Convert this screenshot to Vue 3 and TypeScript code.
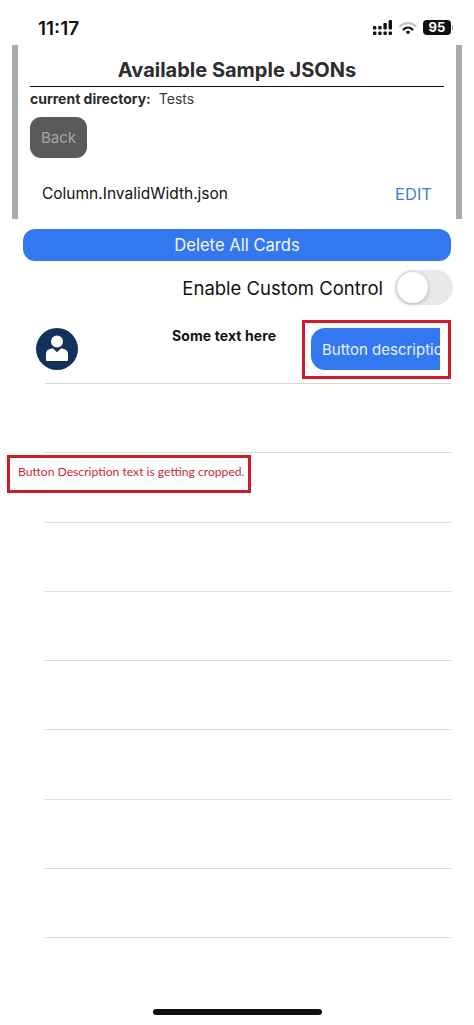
<script setup lang="ts">
const emptyRows: number[] = [1, 2, 3, 4, 5, 6, 7, 8]
</script>

<template>
  <div class="screen">
    <div class="status">
      <span class="time">11:17</span>
      <div class="status-icons">
        <svg class="signal" width="20" height="16" viewBox="0 0 20 16">
          <g fill="#111">
            <rect x="0" y="6" width="3.4" height="3.4" rx="1" />
            <rect x="0" y="11.5" width="3.4" height="3.4" rx="1" />
            <rect x="5.2" y="6" width="3.4" height="3.4" rx="1" />
            <rect x="5.2" y="11.5" width="3.4" height="3.4" rx="1" />
            <rect x="10.4" y="3" width="3.4" height="6.4" rx="1" />
            <rect x="10.4" y="11.5" width="3.4" height="3.4" rx="1" />
            <rect x="15.6" y="0" width="3.4" height="9.4" rx="1" />
            <rect x="15.6" y="11.5" width="3.4" height="3.4" rx="1" />
          </g>
        </svg>
        <svg class="wifi" width="18" height="14" viewBox="0 0 18 14">
          <path d="M1.2 5.2a11.4 11.4 0 0 1 15.6 0" fill="none" stroke="#c4c4c4" stroke-width="2.2" stroke-linecap="round" />
          <path d="M4.6 8.4a6.6 6.6 0 0 1 8.8 0" fill="none" stroke="#111" stroke-width="2.2" stroke-linecap="round" />
          <path d="M6.8 10.9a3.2 3.2 0 0 1 4.4 0L9 13.4z" fill="#111" />
        </svg>
        <div class="battery">95</div>
        <span class="nub"></span>
      </div>
    </div>

    <section class="panel">
      <h1 class="title">Available Sample JSONs</h1>
      <div class="directory">
        <strong>current directory:</strong>
        <span>Tests</span>
      </div>
      <button class="back">Back</button>
      <div class="file-row">
        <span>Column.InvalidWidth.json</span>
        <span class="edit">EDIT</span>
      </div>
    </section>

    <button class="delete">Delete All Cards</button>

    <div class="control">
      <span>Enable Custom Control</span>
      <span class="toggle"><span class="knob"></span></span>
    </div>

    <div class="card-row">
      <svg class="avatar" width="42" height="42" viewBox="0 0 42 42">
        <circle cx="21" cy="21" r="21" fill="#12325c" />
        <circle cx="21" cy="13.500" r="6" fill="#fff" />
        <path d="M10 32v-6q0-4 4-5l2.800-.7 4.200 4 4.200-4 2.800.7q4 1 4 5v6q0 1-1 1h-20q-1 0-1-1z" fill="#fff" />
      </svg>
      <strong class="card-text">Some text here</strong>
      <button class="describe">Button description text</button>
      <span class="mark-button"></span>
    </div>

    <div class="list">
      <div v-for="row in emptyRows" :key="row" class="empty-row"></div>
      <div class="note">Button Description text is getting cropped.</div>
    </div>

    <div class="home"></div>
  </div>
</template>

<style>
html, body {
  margin: 0;
  background: #fff;
}
</style>

<style scoped>
.screen {
  width: 474px;
  height: 1025px;
  overflow: hidden;
  position: relative;
  background: #fff;
  font-family: Inter, "Noto Sans", sans-serif;
  color: #111;
}
.status {
  height: 45px;
  box-sizing: border-box;
  padding: 19px 21px 0 38px;
  display: flex;
  justify-content: space-between;
  align-items: flex-start;
}
.time {
  font-size: 19px;
  line-height: 20px;
  font-weight: 600;
}
.status-icons {
  display: flex;
  align-items: flex-start;
  padding-top: 1px;
}
.signal {
  margin-right: 6px;
}
.wifi {
  margin-right: 6px;
  margin-top: 1px;
}
.battery {
  width: 28px;
  height: 15px;
  border-radius: 4px;
  background: #111;
  color: #fff;
  font-size: 13px;
  line-height: 15px;
  font-weight: 700;
  text-align: center;
}
.nub {
  width: 1px;
  height: 5px;
  margin: 5px 0 0 1px;
  background: #999;
}
.panel {
  height: 174px;
  margin: 0 12px;
  box-sizing: border-box;
  border-left: 6px solid #aaa;
  border-right: 6px solid #aaa;
  padding: 0 12px;
}
.title {
  margin: 0;
  height: 42px;
  box-sizing: border-box;
  padding-top: 12px;
  border-bottom: 1px solid #111;
  font-size: 20px;
  line-height: 26px;
  font-weight: 700;
  text-align: center;
  color: #2d2d2f;
}
.directory {
  display: flex;
  gap: 8px;
  height: 30px;
  padding-top: 3px;
  box-sizing: border-box;
  font-size: 14px;
  line-height: 18px;
  color: #3a3a3c;
}
.directory strong {
  color: #2a2a2c;
}
.back {
  display: block;
  width: 57px;
  height: 41px;
  padding: 0;
  border: 0;
  border-radius: 11px;
  background: #5a5a5a;
  color: #a5a5a5;
  font: 15px Inter, sans-serif;
}
.file-row {
  display: flex;
  justify-content: space-between;
  margin-top: 25px;
  padding: 0 12px;
  font-size: 15.500px;
  line-height: 22px;
}
.edit {
  font-size: 16.500px;
  color: #3f7fd8;
}
.delete {
  display: block;
  width: 428px;
  height: 32px;
  margin: 10px 0 0 23px;
  padding: 0;
  border: 0;
  border-radius: 12px;
  background: #3478f0;
  color: #f2f6ff;
  font: 16.600px Inter, sans-serif;
}
.control {
  display: flex;
  justify-content: flex-end;
  align-items: center;
  gap: 12px;
  height: 35px;
  margin-top: 9px;
  padding-right: 21px;
  font-size: 18.500px;
}
.toggle {
  width: 58px;
  height: 35px;
  box-sizing: border-box;
  padding: 2px;
  border-radius: 18px;
  background: #e9e9eb;
}
.knob {
  display: block;
  width: 31px;
  height: 31px;
  border-radius: 50%;
  background: #fff;
  box-shadow: 0 1px 4px rgba(0, 0, 0, 0.25);
}
.card-row {
  position: relative;
  height: 79px;
  margin: 0 23px 0 45px;
  border-bottom: 1px solid #d9d9dd;
  box-sizing: border-box;
}
.avatar {
  position: absolute;
  left: -9px;
  top: 23px;
}
.card-text {
  position: absolute;
  left: 127px;
  top: 22px;
  font-size: 14px;
  letter-spacing: 0.1px;
  line-height: 18px;
  color: #111;
}
.describe {
  position: absolute;
  left: 266px;
  top: 23px;
  width: 129px;
  height: 42px;
  padding: 0 0 0 11px;
  border: 0;
  border-radius: 14px 0 0 14px;
  background: #3478f0;
  color: #e8f0ff;
  font: 15px Inter, sans-serif;
  text-align: left;
  white-space: nowrap;
  overflow: hidden;
}
.mark-button {
  position: absolute;
  left: 257px;
  top: 15px;
  width: 149px;
  height: 59px;
  box-sizing: border-box;
  border: 3px solid #d01c2a;
}
.list {
  position: relative;
}
.empty-row {
  height: 69.250px;
  margin: 0 23px 0 45px;
  border-bottom: 1px solid #dedee2;
  box-sizing: border-box;
}
.note {
  position: absolute;
  left: 7px;
  top: 71px;
  width: 244px;
  height: 38px;
  box-sizing: border-box;
  border: 3px solid #d01c2a;
  background: #fff;
  padding-left: 8px;
  font-family: Lato, "Open Sans", sans-serif;
  font-size: 12.150px;
  line-height: 28px;
  color: #c8283c;
  white-space: nowrap;
}
.home {
  position: absolute;
  left: 153px;
  bottom: 10px;
  width: 169px;
  height: 6px;
  border-radius: 3px;
  background: #111;
}
</style>
